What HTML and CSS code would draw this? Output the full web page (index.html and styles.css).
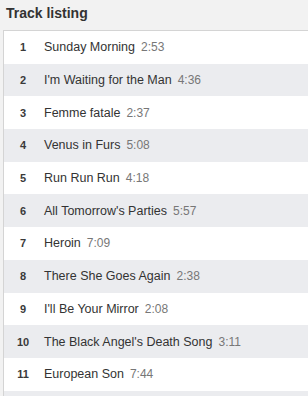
FILE: index.html
```html
<!DOCTYPE html>
<html lang="en">
<head>
  <meta charset="UTF-8" />
  <meta name="viewport" content="width=device-width, initial-scale=1.0"/>
  <title>Track listing</title>
  <link rel="stylesheet" href="styles.css">
</head>
<body>

  <h2 class="section-title">Track listing</h2>

  <ol class="tracklist">
    <li class="track"><span class="track-num">1</span><span class="track-title">Sunday Morning</span><span class="track-time">2:53</span></li>
    <li class="track"><span class="track-num">2</span><span class="track-title">I'm Waiting for the Man</span><span class="track-time">4:36</span></li>
    <li class="track"><span class="track-num">3</span><span class="track-title">Femme fatale</span><span class="track-time">2:37</span></li>
    <li class="track"><span class="track-num">4</span><span class="track-title">Venus in Furs</span><span class="track-time">5:08</span></li>
    <li class="track"><span class="track-num">5</span><span class="track-title">Run Run Run</span><span class="track-time">4:18</span></li>
    <li class="track"><span class="track-num">6</span><span class="track-title">All Tomorrow's Parties</span><span class="track-time">5:57</span></li>
    <li class="track"><span class="track-num">7</span><span class="track-title">Heroin</span><span class="track-time">7:09</span></li>
    <li class="track"><span class="track-num">8</span><span class="track-title">There She Goes Again</span><span class="track-time">2:38</span></li>
    <li class="track"><span class="track-num">9</span><span class="track-title">I'll Be Your Mirror</span><span class="track-time">2:08</span></li>
    <li class="track"><span class="track-num">10</span><span class="track-title">The Black Angel's Death Song</span><span class="track-time">3:11</span></li>
    <li class="track"><span class="track-num">11</span><span class="track-title">European Son</span><span class="track-time">7:44</span></li>
    <li class="track track-footer"></li>
  </ol>

</body>
</html>
```

FILE: styles.css
```css
body {
  margin: 0;
  padding: 0;
  font-family: 'Liberation Sans', Arial, sans-serif;
  background: #f2f2f2;
  color: #333;
}

.section-title {
  margin: 0;
  padding: 0 6px 4px;
  font-size: 14px;
  line-height: 26px;
  font-weight: bold;
  color: #333;
}

.tracklist {
  list-style: none;
  margin: 0 0 0 3px;
  padding: 0;
  background: white;
  border: 1px solid #d4d4d4;
  border-right: none;
}

.track {
  display: flex;
  align-items: center;
  height: 32.7px;
}

.track:nth-child(even) {
  background: #ebecef;
}

.track-num {
  width: 38px;
  text-align: center;
  font-size: 11px;
  font-weight: bold;
  color: #3a3a3a;
}

.track-title {
  margin-left: 2px;
  font-size: 12.5px;
  color: #333;
}

.track-time {
  margin-left: 6px;
  font-size: 12px;
  color: #777;
}
```
